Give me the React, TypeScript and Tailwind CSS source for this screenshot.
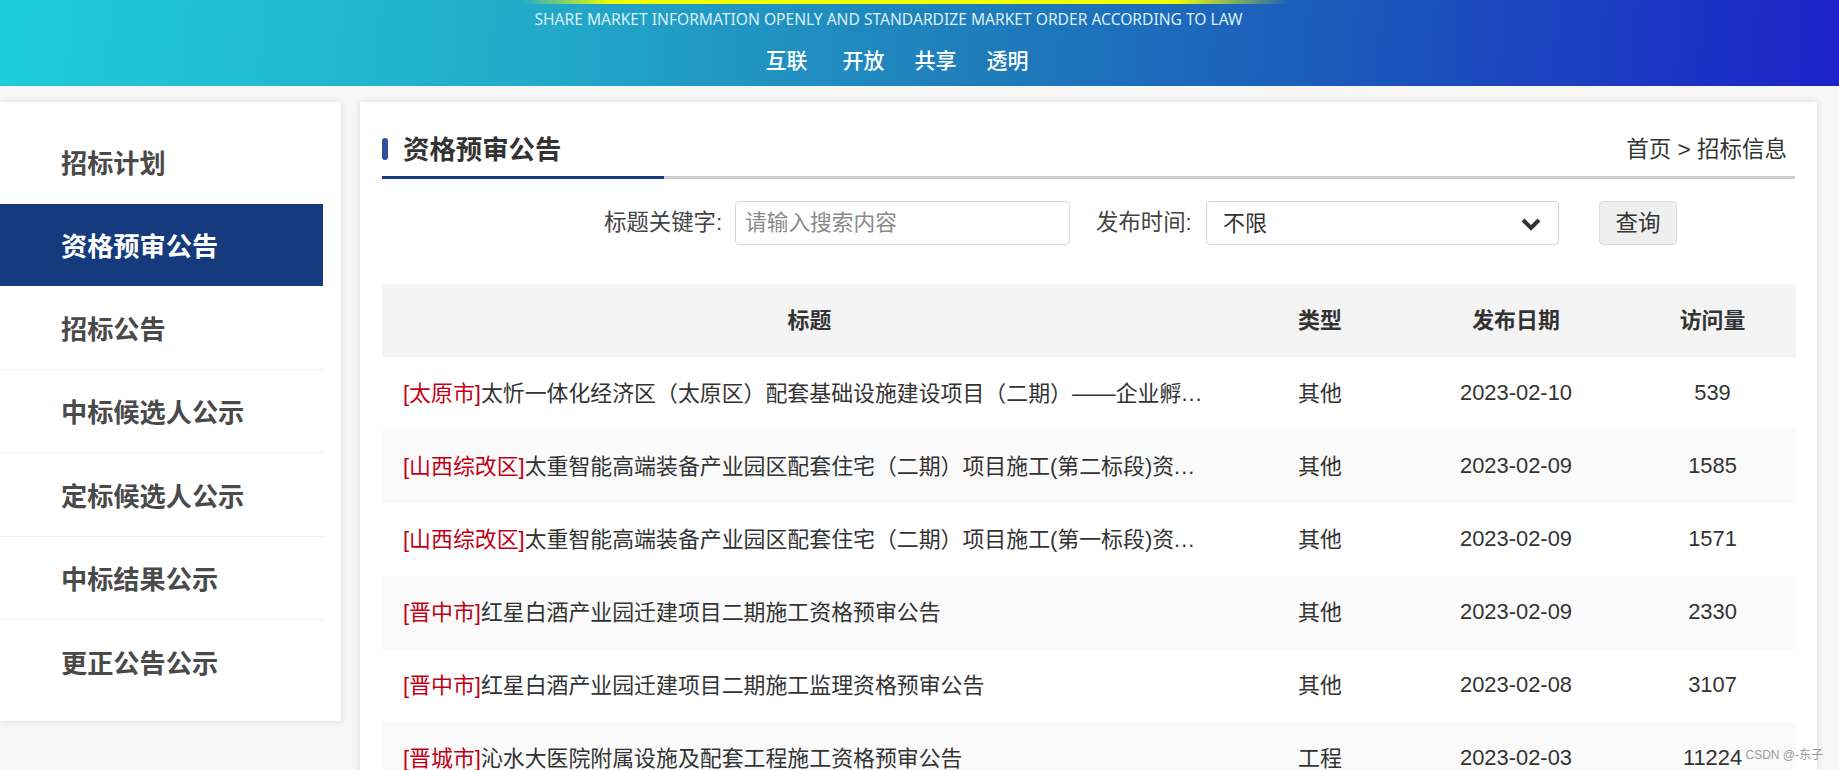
const FONT = "font-['Liberation_Sans','Noto_Sans_CJK_SC',sans-serif]";

const navItems = ["招标计划", "资格预审公告", "招标公告", "中标候选人公示", "定标候选人公示", "中标结果公示", "更正公告公示"];

const navStyles = [
  "h-[83px] text-[#4a4a4a]",
  "h-[82px] pt-[1px] bg-[#153a7e] text-white",
  "h-[84px] pt-[2px] border-b border-[#f1f1f1] text-[#4a4a4a]",
  "h-[83px] pt-[2px] border-b border-[#f1f1f1] text-[#4a4a4a]",
  "h-[84px] pt-[2px] border-b border-[#f1f1f1] text-[#4a4a4a]",
  "h-[83px] pt-[2px] border-b border-[#f1f1f1] text-[#4a4a4a]",
  "h-[83px] pt-[2px] text-[#4a4a4a]",
];

const rows = [
  { area: "太原市", title: "太忻一体化经济区（太原区）配套基础设施建设项目（二期）——企业孵", more: true, kind: "其他", date: "2023-02-10", views: "539" },
  { area: "山西综改区", title: "太重智能高端装备产业园区配套住宅（二期）项目施工(第二标段)资", more: true, kind: "其他", date: "2023-02-09", views: "1585" },
  { area: "山西综改区", title: "太重智能高端装备产业园区配套住宅（二期）项目施工(第一标段)资", more: true, kind: "其他", date: "2023-02-09", views: "1571" },
  { area: "晋中市", title: "红星白酒产业园迁建项目二期施工资格预审公告", more: false, kind: "其他", date: "2023-02-09", views: "2330" },
  { area: "晋中市", title: "红星白酒产业园迁建项目二期施工监理资格预审公告", more: false, kind: "其他", date: "2023-02-08", views: "3107" },
  { area: "晋城市", title: "沁水大医院附属设施及配套工程施工资格预审公告", more: false, kind: "工程", date: "2023-02-03", views: "11224" },
];

export default function App() {
  return (
    <div className={`relative h-[770px] overflow-hidden bg-[#f7f7f7] ${FONT}`}>
      <header className="relative flex h-[86px] flex-col items-center bg-[linear-gradient(95deg,#1fcdd9_0%,#22a9c9_30%,#1f7fbb_52%,#1b55bb_75%,#1c22c8_100%)] pr-[62px] text-white">
        <div className="absolute left-[520px] top-0 h-1 w-[770px] bg-[linear-gradient(90deg,rgba(240,255,0,0)_0%,#f2ff00_12%,#f2ff00_85%,rgba(240,255,0,0)_100%)]" />
        <div className="mt-[8px] font-['Noto_Sans',sans-serif] text-[15.6px] leading-[22px] text-[#dcf0f7]">SHARE MARKET INFORMATION OPENLY AND STANDARDIZE MARKET ORDER ACCORDING TO LAW</div>
        <div className="mt-[15px] flex pl-[17px] font-['Noto_Sans_CJK_SC',sans-serif] text-[21px] font-medium leading-[28px]">
          <span>互联</span>
          <span className="ml-[35px]">开放</span>
          <span className="ml-[30px]">共享</span>
          <span className="ml-[30px]">透明</span>
        </div>
      </header>

      <div className="flex items-start gap-[19px] pt-4">
        <aside className="h-[619px] w-[341px] shrink-0 bg-white pt-[19px] pr-[18px] shadow-[0_0_8px_rgba(0,0,0,0.12)]">
          {navItems.map((item, i) => (
            <div
              key={item}
              className={`flex items-center pl-[61px] font-['Noto_Sans_CJK_SC',sans-serif] text-[26.2px] font-bold ${navStyles[i]}`}
            >
              {item}
            </div>
          ))}
        </aside>

        <main className="h-[700px] w-[1457px] shrink-0 bg-white px-[22px] shadow-[0_0_8px_rgba(0,0,0,0.12)]">
          <div className="relative flex h-[77px] items-center justify-between border-b-[3px] border-[#cbcbcb] pt-[21px]">
            <div className="absolute -bottom-[3px] left-0 h-[3px] w-[282px] bg-[#153a7e]" />
            <div className="flex items-center">
              <span className="mr-[15px] h-[22px] w-[6px] rounded-[3px] bg-[#2f4f9e]" />
              <span className="mb-[4px] font-['Noto_Sans_CJK_SC',sans-serif] text-[26.4px] font-bold text-[#333333]">资格预审公告</span>
            </div>
            <span className="mr-[8px] text-[22.5px] text-[#333333]">首页 &gt; 招标信息</span>
          </div>

          <div className="mt-[22px] flex h-[44px] items-center text-[22.4px] text-[#444444]">
            <label className="ml-[222px] w-[131px] whitespace-nowrap">标题关键字:</label>
            <input
              className="h-[44px] w-[335px] rounded-[4px] border border-[#d9d9d9] px-[9px] text-[21.7px] outline-none placeholder:text-[#8a8a8a]"
              placeholder="请输入搜索内容"
            />
            <label className="ml-[26px] w-[110px] whitespace-nowrap">发布时间:</label>
            <div className="flex h-[44px] w-[353px] items-center justify-between rounded-[4px] border border-[#d9d9d9] pl-[16px] pr-[17px] pt-[1px] text-[22px] text-[#333333]">
              <span>不限</span>
              <svg width="20" height="14" viewBox="0 0 20 14" fill="none" aria-hidden="true">
                <path d="M2 3l8 8 8-8" stroke="#333333" strokeWidth="4" />
              </svg>
            </div>
            <button className="ml-[40px] h-[44px] w-[78px] rounded-[4px] border border-[#dcdcdc] bg-[#efefef] pt-[2px] text-[22.5px] text-[#333333]">查询</button>
          </div>

          <table className="mt-[39px] w-[1414px] table-fixed border-collapse text-[21.9px] text-[#333333]">
            <colgroup>
              <col className="w-[855px]" />
              <col className="w-[166px]" />
              <col className="w-[226px]" />
              <col className="w-[167px]" />
            </colgroup>
            <thead>
              <tr className="h-[73px] bg-[#f4f4f4] font-bold">
                <th className="pt-[2px]">标题</th>
                <th className="pt-[2px]">类型</th>
                <th className="pt-[2px]">发布日期</th>
                <th className="pt-[2px]">访问量</th>
              </tr>
            </thead>
            <tbody>
              {rows.map((r, i) => (
                <tr key={i} className={`h-[73px] ${i % 2 === 1 ? "bg-[#fafafa]" : "bg-white"}`}>
                  <td className="whitespace-nowrap pl-[21px] pt-[2px]">
                    <span className="text-[#c00017]">[{r.area}]</span>
                    {r.title}
                    {r.more && <span className="tracking-[1px]">...</span>}
                  </td>
                  <td className="pt-[2px] text-center">{r.kind}</td>
                  <td className="text-center">{r.date}</td>
                  <td className="text-center">{r.views}</td>
                </tr>
              ))}
            </tbody>
          </table>
        </main>
      </div>

      <div className="absolute bottom-[6px] right-[16px] text-[12px] text-[#9a9a9a]">CSDN @-东子</div>
    </div>
  );
}
